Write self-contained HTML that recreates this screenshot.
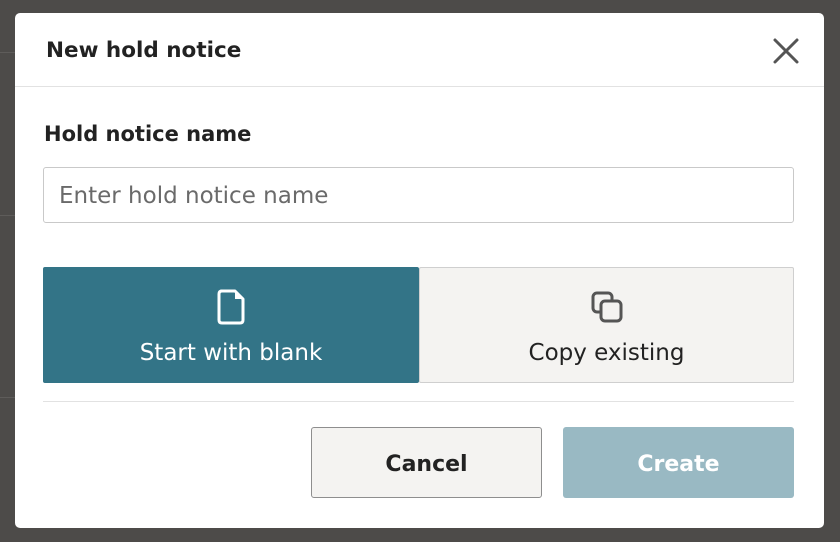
<!DOCTYPE html>
<html><head><style>
body{margin:0;width:840px;height:542px;background:#4d4b49;font-family:"DejaVu Sans",sans-serif;position:relative;overflow:hidden}
.bgl{position:absolute;left:0;width:15px;height:1px;background:#5e5c5a}
.m{position:absolute;left:15px;top:13px;width:809px;height:515px;background:#fff;border-radius:5px}
.t{position:absolute;left:31px;top:25px;font-size:21.5px;color:#222;font-weight:bold}
.x{position:absolute;left:757px;top:24px}
.hr{position:absolute;left:0;right:0;top:73px;height:1px;background:#e2e2e2}
.lb{position:absolute;left:29px;top:109px;font-size:21px;font-weight:bold;color:#222}
.in{position:absolute;left:28px;top:154px;border:1px solid #c9c9c9;border-radius:3px;font-size:23px;color:#6a6a6a;line-height:57px;padding-left:15px;box-sizing:border-box;width:751px;height:56px}
.tile{position:absolute;top:254px;height:116px;box-sizing:border-box;text-align:center;font-size:23px;border-radius:2px}
.a{left:28px;width:376px;background:#337487;color:#fff}
.b{left:404px;width:375px;background:#f4f3f1;border:1px solid #cfcfcf;color:#222}
.tile svg{position:absolute;left:50%;top:22px;transform:translateX(-50%)}
.tile span{position:absolute;left:0;right:0;top:73px}
.b span{top:72px}
.hr2{position:absolute;left:28px;width:751px;top:388px;height:1px;background:#e2e2e2}
.btn{position:absolute;top:414px;height:71px;box-sizing:border-box;border-radius:3px;text-align:center;line-height:75px;font-size:22px;font-weight:bold}
.c{left:296px;width:231px;background:#f4f3f1;border:1px solid #8e8e8e;color:#222;line-height:73px}
.cr{left:548px;width:231px;background:#99b9c3;color:#fff}
</style></head><body>
<div class="bgl" style="top:52px"></div><div class="bgl" style="top:215px"></div><div class="bgl" style="top:397px"></div>
<div class="m">
<div class="t">New hold notice</div>
<svg class="x" width="28" height="28" viewBox="0 0 28 28"><path d="M3 3L25 25M25 3L3 25" stroke="#555" stroke-width="3" stroke-linecap="round"/></svg>
<div class="hr"></div>
<div class="lb">Hold notice name</div>
<div class="in">Enter hold notice name</div>
<div class="tile a"><svg width="30" height="36" viewBox="0 0 30 36"><path d="M5 2H19L27 10V31Q27 34 24 34H6Q3 34 3 31V5Q3 2 6 2Z" fill="none" stroke="#fff" stroke-width="3" stroke-linejoin="round"/><path d="M19 3V10H26Z" fill="#fff"/></svg><span>Start with blank</span></div>
<div class="tile b"><svg width="34" height="34" viewBox="0 0 34 34"><rect x="3" y="3" width="19" height="19" rx="4" fill="none" stroke="#555" stroke-width="3"/><rect x="11" y="11" width="20" height="20" rx="4" fill="#f4f3f1" stroke="#555" stroke-width="3"/></svg><span>Copy existing</span></div>
<div class="hr2"></div>
<div class="btn c">Cancel</div>
<div class="btn cr">Create</div>
</div>
</body></html>
